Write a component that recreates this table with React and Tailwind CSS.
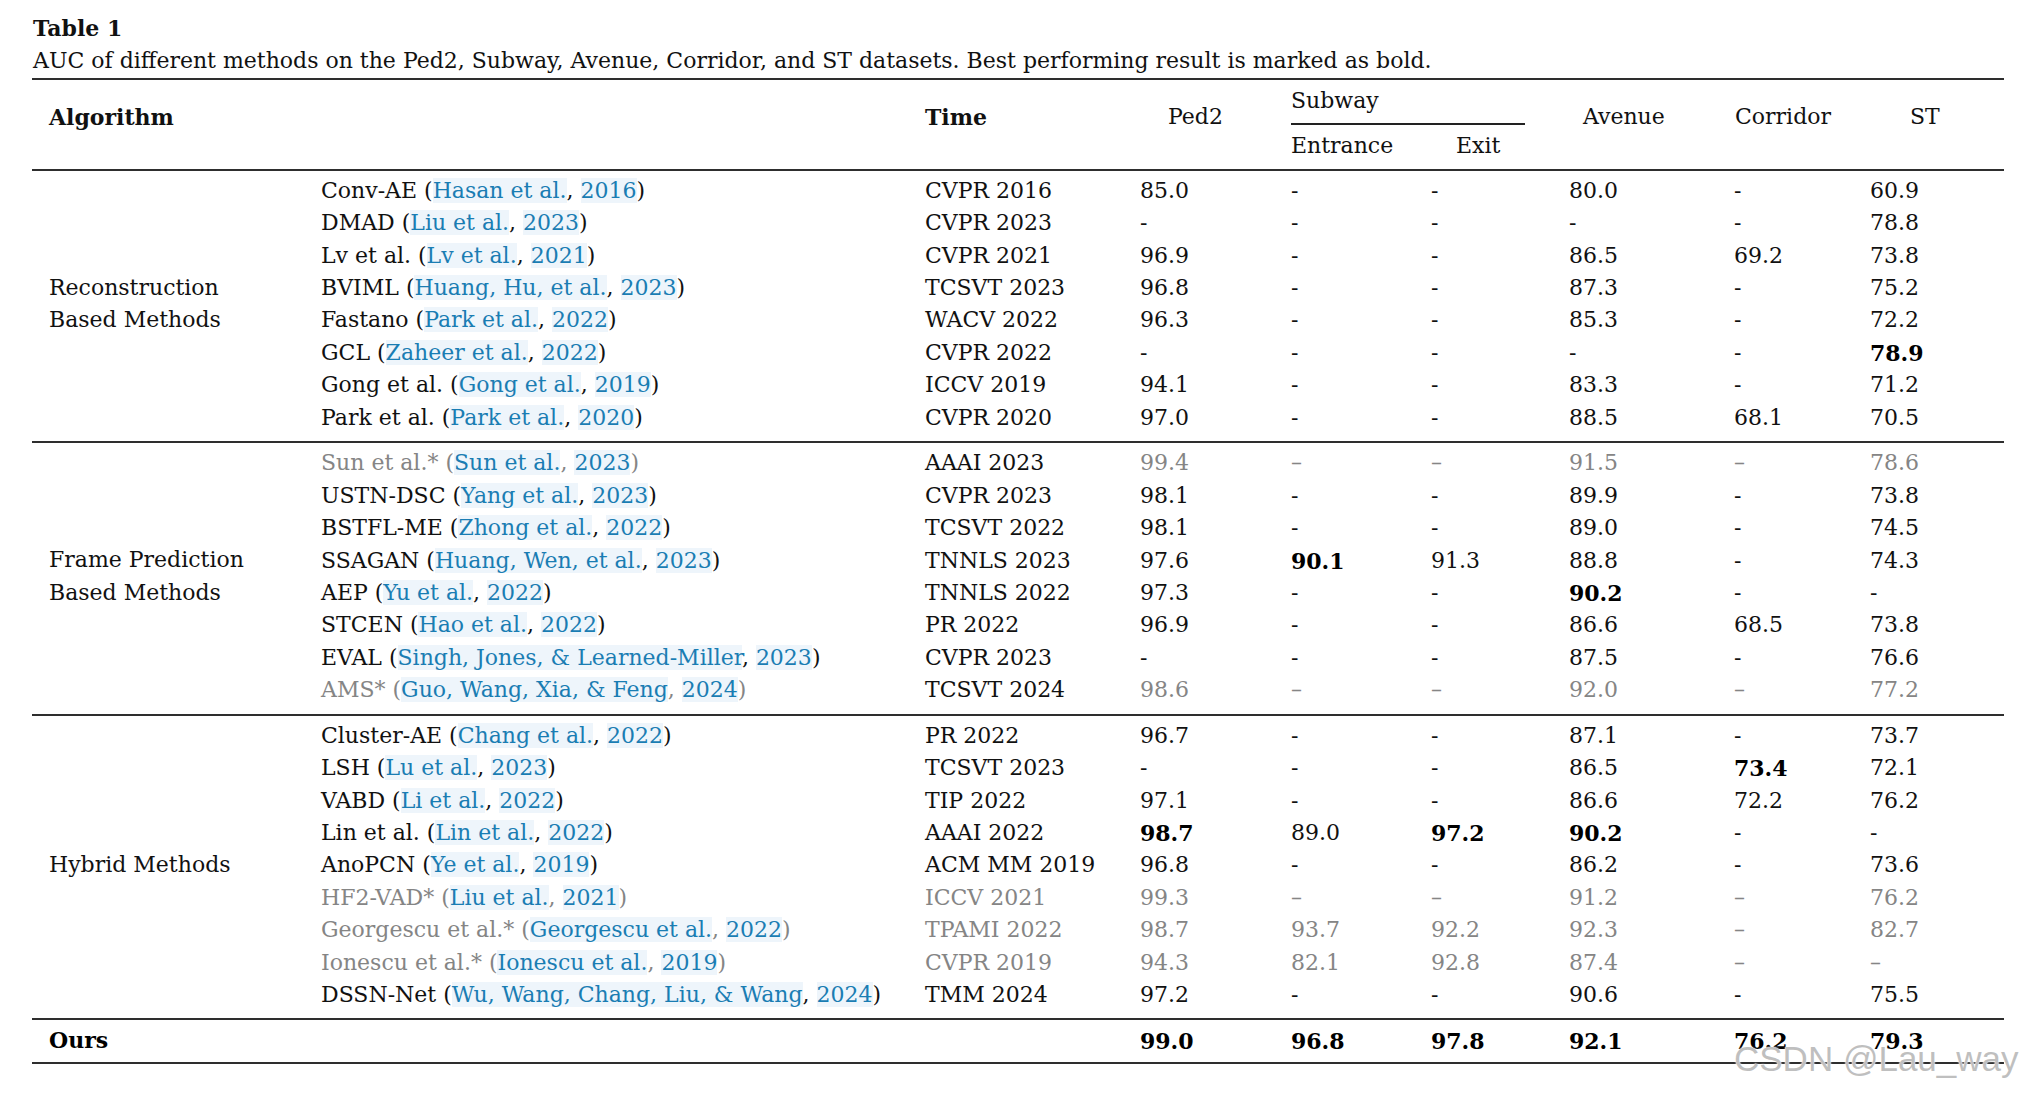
import React from 'react';

// AUC comparison table — column grid measured off the reference (2032px wide page).
const COLS = 'grid grid-cols-[604px_215px_151px_140px_138px_165px_136px_134px]';

const GROUPS = [
    {
        label: ['Reconstruction', 'Based Methods'],
        rows: [
            { name: 'Conv-AE', cite: ['Hasan et al.', '2016'], time: 'CVPR 2016', v: ['85.0', '-', '-', '80.0', '-', '60.9'] },
            { name: 'DMAD', cite: ['Liu et al.', '2023'], time: 'CVPR 2023', v: ['-', '-', '-', '-', '-', '78.8'] },
            { name: 'Lv et al.', cite: ['Lv et al.', '2021'], time: 'CVPR 2021', v: ['96.9', '-', '-', '86.5', '69.2', '73.8'] },
            { name: 'BVIML', cite: ['Huang, Hu, et al.', '2023'], time: 'TCSVT 2023', v: ['96.8', '-', '-', '87.3', '-', '75.2'] },
            { name: 'Fastano', cite: ['Park et al.', '2022'], time: 'WACV 2022', v: ['96.3', '-', '-', '85.3', '-', '72.2'] },
            { name: 'GCL', cite: ['Zaheer et al.', '2022'], time: 'CVPR 2022', v: ['-', '-', '-', '-', '-', '78.9'], bold: [5] },
            { name: 'Gong et al.', cite: ['Gong et al.', '2019'], time: 'ICCV 2019', v: ['94.1', '-', '-', '83.3', '-', '71.2'] },
            { name: 'Park et al.', cite: ['Park et al.', '2020'], time: 'CVPR 2020', v: ['97.0', '-', '-', '88.5', '68.1', '70.5'] },
        ],
    },
    {
        label: ['Frame Prediction', 'Based Methods'],
        rows: [
            { name: 'Sun et al.*', cite: ['Sun et al.', '2023'], time: 'AAAI 2023', v: ['99.4', '–', '–', '91.5', '–', '78.6'], gray: true },
            { name: 'USTN-DSC', cite: ['Yang et al.', '2023'], time: 'CVPR 2023', v: ['98.1', '-', '-', '89.9', '-', '73.8'] },
            { name: 'BSTFL-ME', cite: ['Zhong et al.', '2022'], time: 'TCSVT 2022', v: ['98.1', '-', '-', '89.0', '-', '74.5'] },
            { name: 'SSAGAN', cite: ['Huang, Wen, et al.', '2023'], time: 'TNNLS 2023', v: ['97.6', '90.1', '91.3', '88.8', '-', '74.3'], bold: [1] },
            { name: 'AEP', cite: ['Yu et al.', '2022'], time: 'TNNLS 2022', v: ['97.3', '-', '-', '90.2', '-', '-'], bold: [3] },
            { name: 'STCEN', cite: ['Hao et al.', '2022'], time: 'PR 2022', v: ['96.9', '-', '-', '86.6', '68.5', '73.8'] },
            { name: 'EVAL', cite: ['Singh, Jones, & Learned-Miller', '2023'], time: 'CVPR 2023', v: ['-', '-', '-', '87.5', '-', '76.6'] },
            { name: 'AMS*', cite: ['Guo, Wang, Xia, & Feng', '2024'], time: 'TCSVT 2024', v: ['98.6', '–', '–', '92.0', '–', '77.2'], gray: true },
        ],
    },
    {
        label: ['Hybrid Methods'],
        rows: [
            { name: 'Cluster-AE', cite: ['Chang et al.', '2022'], time: 'PR 2022', v: ['96.7', '-', '-', '87.1', '-', '73.7'] },
            { name: 'LSH', cite: ['Lu et al.', '2023'], time: 'TCSVT 2023', v: ['-', '-', '-', '86.5', '73.4', '72.1'], bold: [4] },
            { name: 'VABD', cite: ['Li et al.', '2022'], time: 'TIP 2022', v: ['97.1', '-', '-', '86.6', '72.2', '76.2'] },
            { name: 'Lin et al.', cite: ['Lin et al.', '2022'], time: 'AAAI 2022', v: ['98.7', '89.0', '97.2', '90.2', '-', '-'], bold: [0, 2, 3] },
            { name: 'AnoPCN', cite: ['Ye et al.', '2019'], time: 'ACM MM 2019', v: ['96.8', '-', '-', '86.2', '-', '73.6'] },
            { name: 'HF2-VAD*', cite: ['Liu et al.', '2021'], time: 'ICCV 2021', v: ['99.3', '–', '–', '91.2', '–', '76.2'], gray: true, grayTime: true },
            { name: 'Georgescu et al.*', cite: ['Georgescu et al.', '2022'], time: 'TPAMI 2022', v: ['98.7', '93.7', '92.2', '92.3', '–', '82.7'], gray: true, grayTime: true },
            { name: 'Ionescu et al.*', cite: ['Ionescu et al.', '2019'], time: 'CVPR 2019', v: ['94.3', '82.1', '92.8', '87.4', '–', '–'], gray: true, grayTime: true },
            { name: 'DSSN-Net', cite: ['Wu, Wang, Chang, Liu, & Wang', '2024'], time: 'TMM 2024', v: ['97.2', '-', '-', '90.6', '-', '75.5'] },
        ],
    },
];

const Rule = () => <div className="h-[2px] bg-[#2e2e2e]" />;

const Link = ({ children }) => <span className="text-[#1a7db3] bg-[#eef5fb]">{children}</span>;

const Row = ({ row }) => {
    const ink = row.gray ? 'text-[#858585]' : 'text-[#111]';
    return (
        <div className={`${COLS} h-[32.45px] items-center`}>
            <div className={`${ink} whitespace-nowrap`}>
                {row.name} (<Link>{row.cite[0]}</Link>, <Link>{row.cite[1]}</Link>)
            </div>
            <div className={row.grayTime ? 'text-[#858585]' : 'text-[#111]'}>{row.time}</div>
            {row.v.map((val, i) => (
                <div key={i} className={`${ink} ${row.bold && row.bold.includes(i) ? 'font-bold text-black' : ''}`}>
                    {val}
                </div>
            ))}
        </div>
    );
};

const Group = ({ group }) => (
    <div className="flex pt-[4px] pb-[7px]">
        <div className="w-[289px] pl-[17px] flex flex-col justify-center text-[#111]">
            {group.label.map((l) => (
                <div key={l} className="leading-[32.45px]">{l}</div>
            ))}
        </div>
        <div className="flex flex-col">
            {group.rows.map((r) => (
                <Row key={r.name} row={r} />
            ))}
        </div>
    </div>
);

export default function App() {
    return (
        <div className="relative w-[2032px] h-[1094px] bg-white font-['DejaVu_Serif',serif] text-[22px] leading-[32px] text-[#111] overflow-hidden">
            <div className="pl-[33px] pt-[12px]">
                <div className="font-bold">Table 1</div>
                <div className="mt-[1px]">
                    AUC of different methods on the Ped2, Subway, Avenue, Corridor, and ST datasets. Best performing result is marked as bold.
                </div>
            </div>
            <div className="ml-[32px] w-[1972px] mt-[1px]">
                <Rule />
                {/* header */}
                <div className="flex h-[88.5px]">
                    <div className="w-[893px] pl-[17px] pt-[21px] font-bold">Algorithm</div>
                    <div className="w-[215px] pt-[21px] font-bold">Time</div>
                    <div className="w-[151px] pl-[28px] pt-[21px]">Ped2</div>
                    <div className="w-[278px] flex flex-col leading-[28px]">
                        <div className="pt-[7px]">Subway</div>
                        <div className="mt-[8px] w-[234px] h-[1.5px] bg-[#222]" />
                        <div className="mt-[7px] flex">
                            <div className="w-[165px]">Entrance</div>
                            <div>Exit</div>
                        </div>
                    </div>
                    <div className="w-[165px] pl-[14px] pt-[21px]">Avenue</div>
                    <div className="w-[136px] pl-[1px] pt-[21px]">Corridor</div>
                    <div className="w-[134px] pl-[40px] pt-[21px]">ST</div>
                </div>
                <Rule />
                {GROUPS.map((g, i) => (
                    <React.Fragment key={i}>
                        <Group group={g} />
                        <Rule />
                    </React.Fragment>
                ))}
                {/* ours */}
                <div className="flex pt-[4px] pb-[5px] font-bold text-black">
                    <div className="w-[289px] pl-[17px] leading-[32.45px]">Ours</div>
                    <div className={`${COLS} h-[32.45px] items-center`}>
                        <div />
                        <div />
                        <div>99.0</div>
                        <div>96.8</div>
                        <div>97.8</div>
                        <div>92.1</div>
                        <div>76.2</div>
                        <div>79.3</div>
                    </div>
                </div>
                <Rule />
            </div>
            {/* watermark */}
            <div className="absolute left-[1734px] top-[1039px] font-['Liberation_Sans',sans-serif] text-[35px] leading-[40px] text-[#b4b4b4]/85 [text-shadow:0_0_2px_#ffffff,0_0_1px_#ffffff] whitespace-nowrap">
                CSDN @Lau_way
            </div>
        </div>
    );
}
